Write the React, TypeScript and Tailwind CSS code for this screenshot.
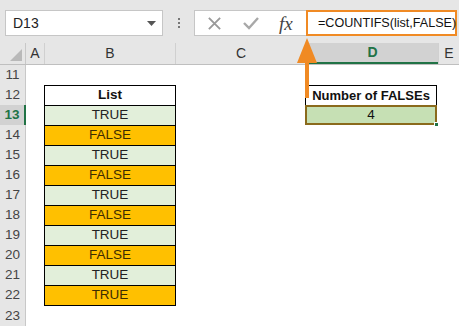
import React from "react";

const rows = [11, 12, 13, 14, 15, 16, 17, 18, 19, 20, 21, 22, 23];
const listVals: Record<number, [string, string]> = {
  13: ["TRUE", "t"],
  14: ["FALSE", "f"],
  15: ["TRUE", "t"],
  16: ["FALSE", "f"],
  17: ["TRUE", "t"],
  18: ["FALSE", "f"],
  19: ["TRUE", "t"],
  20: ["FALSE", "f"],
  21: ["TRUE", "t"],
  22: ["TRUE", "f"],
};

export default function App() {
  return (
    <div
      className="relative w-[459px] h-[326px] overflow-hidden bg-white"
      style={{ fontFamily: '"Liberation Sans", Arial, sans-serif' }}
    >
      {/* Toolbar */}
      <div className="h-[43px] bg-[#e6e6e6] flex items-start pt-[10px]">
        <div className="shrink-0 ml-[5px] w-[158px] h-[26px] bg-white border border-[#c6c6c6] flex items-center justify-between pl-[7px] pr-[6px]">
          <span className="text-[14px] text-[#222]">D13</span>
          <svg width="9" height="5" viewBox="0 0 9 5">
            <path d="M0 0 L9 0 L4.5 5 Z" fill="#555" />
          </svg>
        </div>
        <div className="shrink-0 w-[31px] h-[26px] flex flex-col items-center justify-center gap-[2px]">
          <div className="w-[2px] h-[2px] bg-[#777]" />
          <div className="w-[2px] h-[2px] bg-[#777]" />
          <div className="w-[2px] h-[2px] bg-[#777]" />
        </div>
        <div className="shrink-0 w-[112px] h-[26px] bg-white border border-[#c6c6c6] border-r-0 flex items-center">
          <svg width="15" height="15" viewBox="0 0 16 16" className="ml-[12px]">
            <path d="M2 2 L14 14 M14 2 L2 14" stroke="#9a9a9a" strokeWidth="2" />
          </svg>
          <svg width="16" height="14" viewBox="0 0 16 14" className="ml-[21px]">
            <path d="M1 7 L6 12 L15 2" stroke="#a8a8a8" strokeWidth="2.4" fill="none" />
          </svg>
          <span
            className="ml-[20px] text-[19px] italic text-[#444] leading-none"
            style={{ fontFamily: '"Liberation Serif", "Times New Roman", serif' }}
          >
            fx
          </span>
        </div>
        <div className="flex-1 min-w-0 h-[26px] bg-white border-2 border-[#f08a24] flex items-center pl-[10px] mr-[2px]">
          <span className="text-[12.6px] text-[#111] whitespace-nowrap">=COUNTIFS(list,FALSE)</span>
        </div>
      </div>

      {/* Column header row */}
      <div className="flex h-[22px] bg-[#e6e6e6] border-b border-[#bfbfbf] text-[14px] text-[#333]">
        <div className="shrink-0 w-[26px] border-r border-[#c8c8c8] relative">
          <svg width="12" height="12" viewBox="0 0 12 12" className="absolute right-[3px] bottom-[3px]">
            <path d="M12 0 L12 12 L0 12 Z" fill="#b9b9b9" />
          </svg>
        </div>
        <div className="shrink-0 w-[19px] border-r border-[#d0d0d0] flex items-center justify-center">A</div>
        <div className="shrink-0 w-[131px] border-r border-[#d0d0d0] flex items-center justify-center">B</div>
        <div className="shrink-0 w-[131px] border-r border-[#d0d0d0] flex items-center justify-center">C</div>
        <div className="shrink-0 w-[131px] bg-[#d2d2d2] border-b-2 border-[#217346] flex items-center justify-center font-bold text-[#217346]">
          D
        </div>
        <div className="flex-1 border-l border-[#d0d0d0] flex items-center justify-center">E</div>
      </div>

      {/* Rows */}
      <div className="flex flex-col">
        {rows.map((r) => {
          const sel = r === 13;
          const v = listVals[r];
          let bCell: React.ReactNode = null;
          if (r === 12) {
            bCell = (
              <div className="shrink-0 w-[132px] -ml-px border border-b-0 border-black bg-white flex items-center justify-center font-bold text-[#111]">
                List
              </div>
            );
          } else if (v) {
            const isF = v[1] === "f";
            bCell = (
              <div
                className={
                  "shrink-0 w-[132px] -ml-px border border-black flex items-center justify-center " +
                  (r === 22 ? "" : "border-b-0 ") +
                  (isF ? "bg-[#ffc000] text-[#3d2c00]" : "bg-[#e2efda] text-[#222]")
                }
              >
                {v[0]}
              </div>
            );
          } else {
            bCell = <div className="shrink-0 w-[131px]" />;
          }
          let dCell: React.ReactNode = <div className="shrink-0 w-[131px]" />;
          if (r === 12) {
            dCell = (
              <div className="shrink-0 w-[132px] -ml-px border border-b-0 border-black bg-white flex items-center justify-center font-bold text-[#111] text-[13px]">
                Number of FALSEs
              </div>
            );
          } else if (r === 13) {
            dCell = (
              <div className="relative shrink-0 w-[132px] -ml-px border-2 border-[#8a6a1c] bg-[#c6e0b4] flex items-center justify-center text-[#111]">
                4
                <div className="absolute -right-[4px] -bottom-[4px] w-[5px] h-[5px] bg-[#217346] border border-white" />
              </div>
            );
          }
          return (
            <div key={r} className={"flex text-[13.5px] " + (r === 22 ? "h-[21px]" : "h-[20px]")}>
              <div
                className={
                  "shrink-0 w-[26px] flex items-center justify-center " +
                  (sel
                    ? "bg-[#d2d2d2] text-[#217346] font-bold border-r-2 border-[#217346]"
                    : "bg-[#e6e6e6] text-[#444] border-r border-[#c8c8c8]")
                }
              >
                {r}
              </div>
              <div className="shrink-0 w-[19px]" />
              {bCell}
              <div className="shrink-0 w-[130px]" />
              {dCell}
              <div className="flex-1" />
            </div>
          );
        })}
      </div>

      {/* Arrow overlay */}
      <svg
        className="absolute left-[295px] top-[37px]"
        width="24"
        height="64"
        viewBox="0 0 24 64"
      >
        <path d="M12 1 L22 26 L2 26 Z" fill="#f08a24" />
        <rect x="10" y="24" width="4" height="37" fill="#f08a24" />
      </svg>
    </div>
  );
}
